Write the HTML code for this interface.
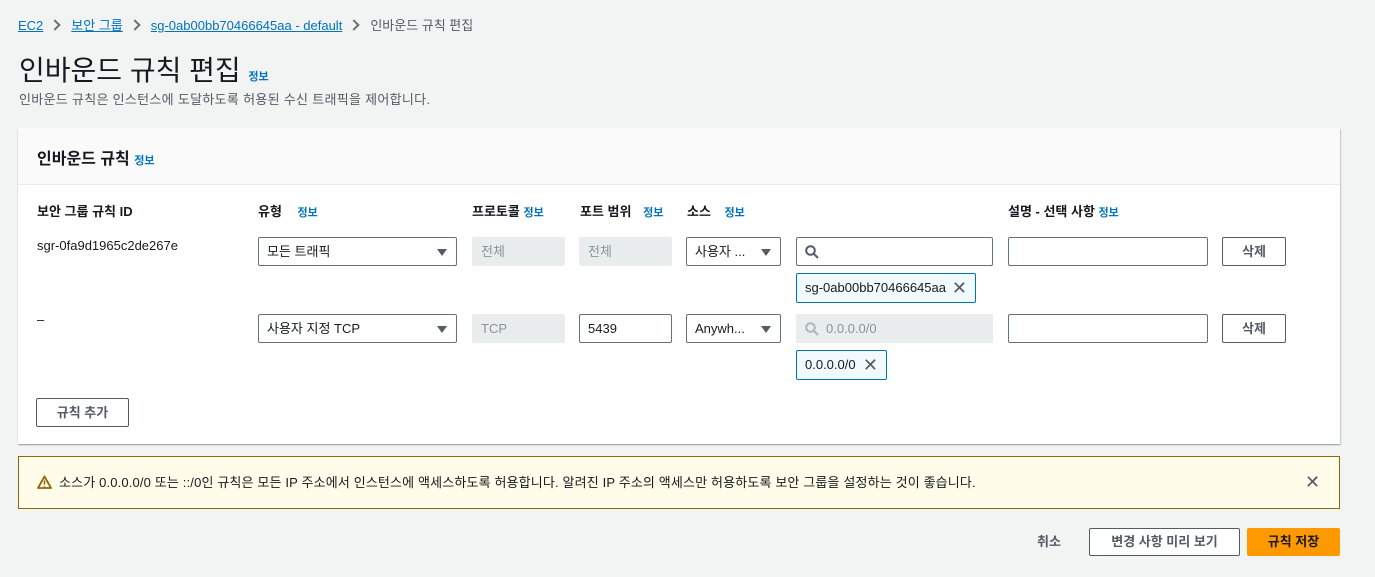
<!DOCTYPE html>
<html><head><meta charset="utf-8"><style>
*{box-sizing:border-box;margin:0;padding:0}
body{width:1375px;height:577px;background:#f2f3f3;font-family:"Liberation Sans","Noto Sans CJK KR",sans-serif;color:#16191f;font-size:13px;position:relative;overflow:hidden}
.a{position:absolute;white-space:nowrap}
.lnk{color:#0073bb;text-decoration:underline}
.info{color:#0073bb;font-size:11px;font-weight:bold}
.bx{position:absolute;height:29px;border:1px solid #687078;border-radius:2px;background:#fff;padding:0 8px;line-height:27px;font-size:13px}
.dis{background:#eaeded;border-color:#eaeded;color:#879596}
.arr{position:absolute;right:9px;top:11px;width:0;height:0;border-left:5px solid transparent;border-right:5px solid transparent;border-top:7px solid #545b64}
.tok{position:absolute;height:30px;border:1px solid #0073bb;background:#f1faff;border-radius:2px;padding:0 8px;line-height:28px}
.btn{position:absolute;border:1px solid #545b64;background:#fff;border-radius:2px;text-align:center;font-weight:bold;color:#545b64}
.th{font-weight:bold;font-size:13px}
.sep{display:inline-block;width:8px;height:8px;border-right:2px solid #687078;border-top:2px solid #687078;transform:rotate(45deg);margin:0 12px 1px 8px}
</style></head><body>
<div class="a" style="left:18px;top:15px;font-size:13px"><span class="lnk">EC2</span><span class="sep"></span><span class="lnk">보안 그룹</span><span class="sep"></span><span class="lnk">sg-0ab00bb70466645aa - default</span><span class="sep"></span><span style="color:#545b64">인바운드 규칙 편집</span></div>
<div class="a" style="left:19px;top:49px;font-size:28px">인바운드 규칙 편집 <span class="info">정보</span></div>
<div class="a" style="left:19px;top:89px;font-size:13px;color:#545b64;letter-spacing:0.3px">인바운드 규칙은 인스턴스에 도달하도록 허용된 수신 트래픽을 제어합니다.</div>

<div class="a" style="left:18px;top:128px;width:1322px;height:316px;background:#fff;box-shadow:0 1px 1px rgba(0,28,36,.3),1px 1px 1px rgba(0,28,36,.15)"></div>
<div class="a" style="left:18px;top:128px;width:1322px;height:57px;background:#fafafa;border-bottom:1px solid #eaeded"></div>
<div class="a" style="left:37px;top:145px;font-size:16px;font-weight:bold">인바운드 규칙 <span class="info">정보</span></div>

<div class="a th" style="left:37px;top:201px">보안 그룹 규칙 ID</div>
<div class="a th" style="left:258px;top:201px">유형 <span class="info" style="margin-left:12px">정보</span></div>
<div class="a th" style="left:472px;top:201px">프로토콜 <span class="info">정보</span></div>
<div class="a th" style="left:580px;top:201px">포트 범위 <span class="info" style="margin-left:8px">정보</span></div>
<div class="a th" style="left:687px;top:201px">소스 <span class="info" style="margin-left:10px">정보</span></div>
<div class="a th" style="left:1008px;top:201px">설명 - 선택 사항 <span class="info">정보</span></div>

<div class="a" style="left:37px;top:238px">sgr-0fa9d1965c2de267e</div>
<div class="bx" style="left:258px;top:237px;width:199px">모든 트래픽<div class="arr"></div></div>
<div class="bx dis" style="left:472px;top:237px;width:93px">전체</div>
<div class="bx dis" style="left:579px;top:237px;width:93px">전체</div>
<div class="bx" style="left:686px;top:237px;width:95px">사용자 ...<div class="arr"></div></div>
<div class="bx" style="left:796px;top:237px;width:197px"><svg width="14" height="14" style="position:absolute;left:8px;top:7px"><circle cx="5.5" cy="5.5" r="4.3" fill="none" stroke="#545b64" stroke-width="2"/><path d="M8.5 8.5L13 13" stroke="#545b64" stroke-width="2"/></svg></div>
<div class="bx" style="left:1008px;top:237px;width:200px"></div>
<div class="btn" style="left:1222px;top:237px;width:64px;height:29px;line-height:27px">삭제</div>
<div class="tok" style="left:796px;top:273px;width:180px">sg-0ab00bb70466645aa <span style="position:absolute;right:8px;top:0;font-size:18px;color:#545b64">&#x2715;</span></div>

<div class="a" style="left:37px;top:312px">–</div>
<div class="bx" style="left:258px;top:314px;width:199px">사용자 지정 TCP<div class="arr"></div></div>
<div class="bx dis" style="left:472px;top:314px;width:93px">TCP</div>
<div class="bx" style="left:579px;top:314px;width:93px">5439</div>
<div class="bx" style="left:686px;top:314px;width:95px">Anywh...<div class="arr"></div></div>
<div class="bx dis" style="left:796px;top:314px;width:197px;padding-left:29px">0.0.0.0/0<svg width="14" height="14" style="position:absolute;left:8px;top:7px"><circle cx="5.5" cy="5.5" r="4.3" fill="none" stroke="#aab7b8" stroke-width="2"/><path d="M8.5 8.5L13 13" stroke="#aab7b8" stroke-width="2"/></svg></div>
<div class="bx" style="left:1008px;top:314px;width:200px"></div>
<div class="btn" style="left:1222px;top:314px;width:64px;height:29px;line-height:27px">삭제</div>
<div class="tok" style="left:796px;top:350px;width:91px">0.0.0.0/0 <span style="position:absolute;right:8px;top:0;font-size:18px;color:#545b64">&#x2715;</span></div>

<div class="btn" style="left:36px;top:398px;width:93px;height:29px;line-height:27px">규칙 추가</div>

<div class="a" style="left:18px;top:456px;width:1322px;height:53px;background:#fffce9;border:1px solid #906806"></div>
<svg class="a" style="left:37px;top:475px" width="15" height="14"><path d="M7.5 1.5L14 13H1Z" fill="none" stroke="#906806" stroke-width="1.8" stroke-linejoin="round"/><path d="M7.5 5.5v4M7.5 10.8v1" stroke="#906806" stroke-width="1.5"/></svg>
<div class="a" style="left:59px;top:472px;font-size:13px;letter-spacing:0.15px">소스가 0.0.0.0/0 또는 ::/0인 규칙은 모든 IP 주소에서 인스턴스에 액세스하도록 허용합니다. 알려진 IP 주소의 액세스만 허용하도록 보안 그룹을 설정하는 것이 좋습니다.</div>
<div class="a" style="left:1305px;top:472px;font-size:18px;color:#545b64">&#x2715;</div>

<div class="a" style="left:1037px;top:531px;font-weight:bold;color:#545b64">취소</div>
<div class="btn" style="left:1089px;top:528px;width:151px;height:28px;line-height:26px">변경 사항 미리 보기</div>
<div class="btn" style="left:1247px;top:528px;width:93px;height:28px;line-height:26px;background:#ff9900;border-color:#ff9900;color:#16191f">규칙 저장</div>
</body></html>
